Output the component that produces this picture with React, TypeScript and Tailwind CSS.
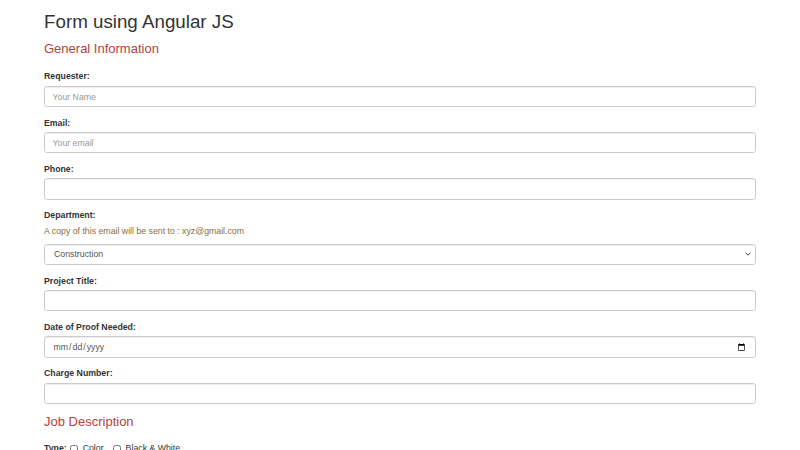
import React from "react";

const inputCls =
  "block w-full h-[21.25px] px-[7.5px] text-[8.75px] leading-[1.43] text-[#555] bg-white border border-[#ccc] rounded-[2.5px] shadow-[inset_0_1px_1px_rgba(0,0,0,0.075)] placeholder:text-[#999] outline-none";
const labelCls = "block text-[8.75px] leading-[12.5px] font-bold text-[#333] mb-[3.1px]";

function Group({ label, children }: { label: string; children: React.ReactNode }) {
  return (
    <div className="mb-[9.4px]">
      <label className={labelCls}>{label}</label>
      {children}
    </div>
  );
}

export default function App() {
  return (
    <div
      className="w-[800px] h-[450px] overflow-hidden bg-white text-[#333]"
      style={{ fontFamily: '"Liberation Sans", Arial, sans-serif' }}
    >
      <div className="w-[712px] mx-auto pt-[12.3px]">
        <h2 className="text-[18.75px] leading-[1.1] font-normal text-[#333]">Form using Angular JS</h2>
        <h3 className="mt-[8.85px] mb-[14.25px] text-[13px] leading-[1.1] font-normal text-[#b5403d]">
          General Information
        </h3>

        <Group label="Requester:">
          <input type="text" className={inputCls} placeholder="Your Name" />
        </Group>
        <Group label="Email:">
          <input type="text" className={inputCls} placeholder="Your email" />
        </Group>
        <Group label="Phone:">
          <input type="text" className={inputCls} />
        </Group>
        <div className="mb-[9.4px]">
          <label className={labelCls}>Department:</label>
          <p className="mt-[1px] mb-[6.75px] text-[8.75px] leading-[12.5px] text-[#8a6d3b]">
            A copy of this email will be sent to : xyz@gmail.com
          </p>
          <div className="relative">
            <select
              className="block w-full h-[21.25px] pl-[9px] pr-[20px] text-[8.75px] leading-[1.43] text-[#555] bg-white border border-[#ccc] rounded-[2.5px] shadow-[inset_0_1px_1px_rgba(0,0,0,0.075)] outline-none appearance-none"
              defaultValue="Construction"
            >
              <option>Construction</option>
              <option>Design</option>
              <option>Marketing</option>
            </select>
            <svg
              className="absolute right-[5px] top-1/2 -translate-y-1/2 pointer-events-none"
              width="6"
              height="4"
              viewBox="0 0 6 4"
            >
              <path d="M0.6 0.7 L3 3.1 L5.4 0.7" fill="none" stroke="#444" strokeWidth="1" />
            </svg>
          </div>
        </div>
        <Group label="Project Title:">
          <input type="text" className={inputCls} />
        </Group>
        <Group label="Date of Proof Needed:">
          <input type="date" className={inputCls} />
        </Group>
        <Group label="Charge Number:">
          <input type="text" className={inputCls} />
        </Group>

        <h3 className="mt-[11.5px] text-[13px] leading-[1.1] font-normal text-[#b5403d]">Job Description</h3>

        <div className="mt-[12.8px] flex items-center text-[8.75px] leading-[12.5px] text-[#333]">
          <span className="font-bold">Type:</span>
          <input type="checkbox" className="ml-[3px] mr-[5px] w-[8px] h-[8px] m-0" />
          <span>Color</span>
          <input type="checkbox" className="ml-[9px] mr-[5px] w-[8px] h-[8px] m-0" />
          <span>Black &amp; White</span>
        </div>
      </div>
    </div>
  );
}
